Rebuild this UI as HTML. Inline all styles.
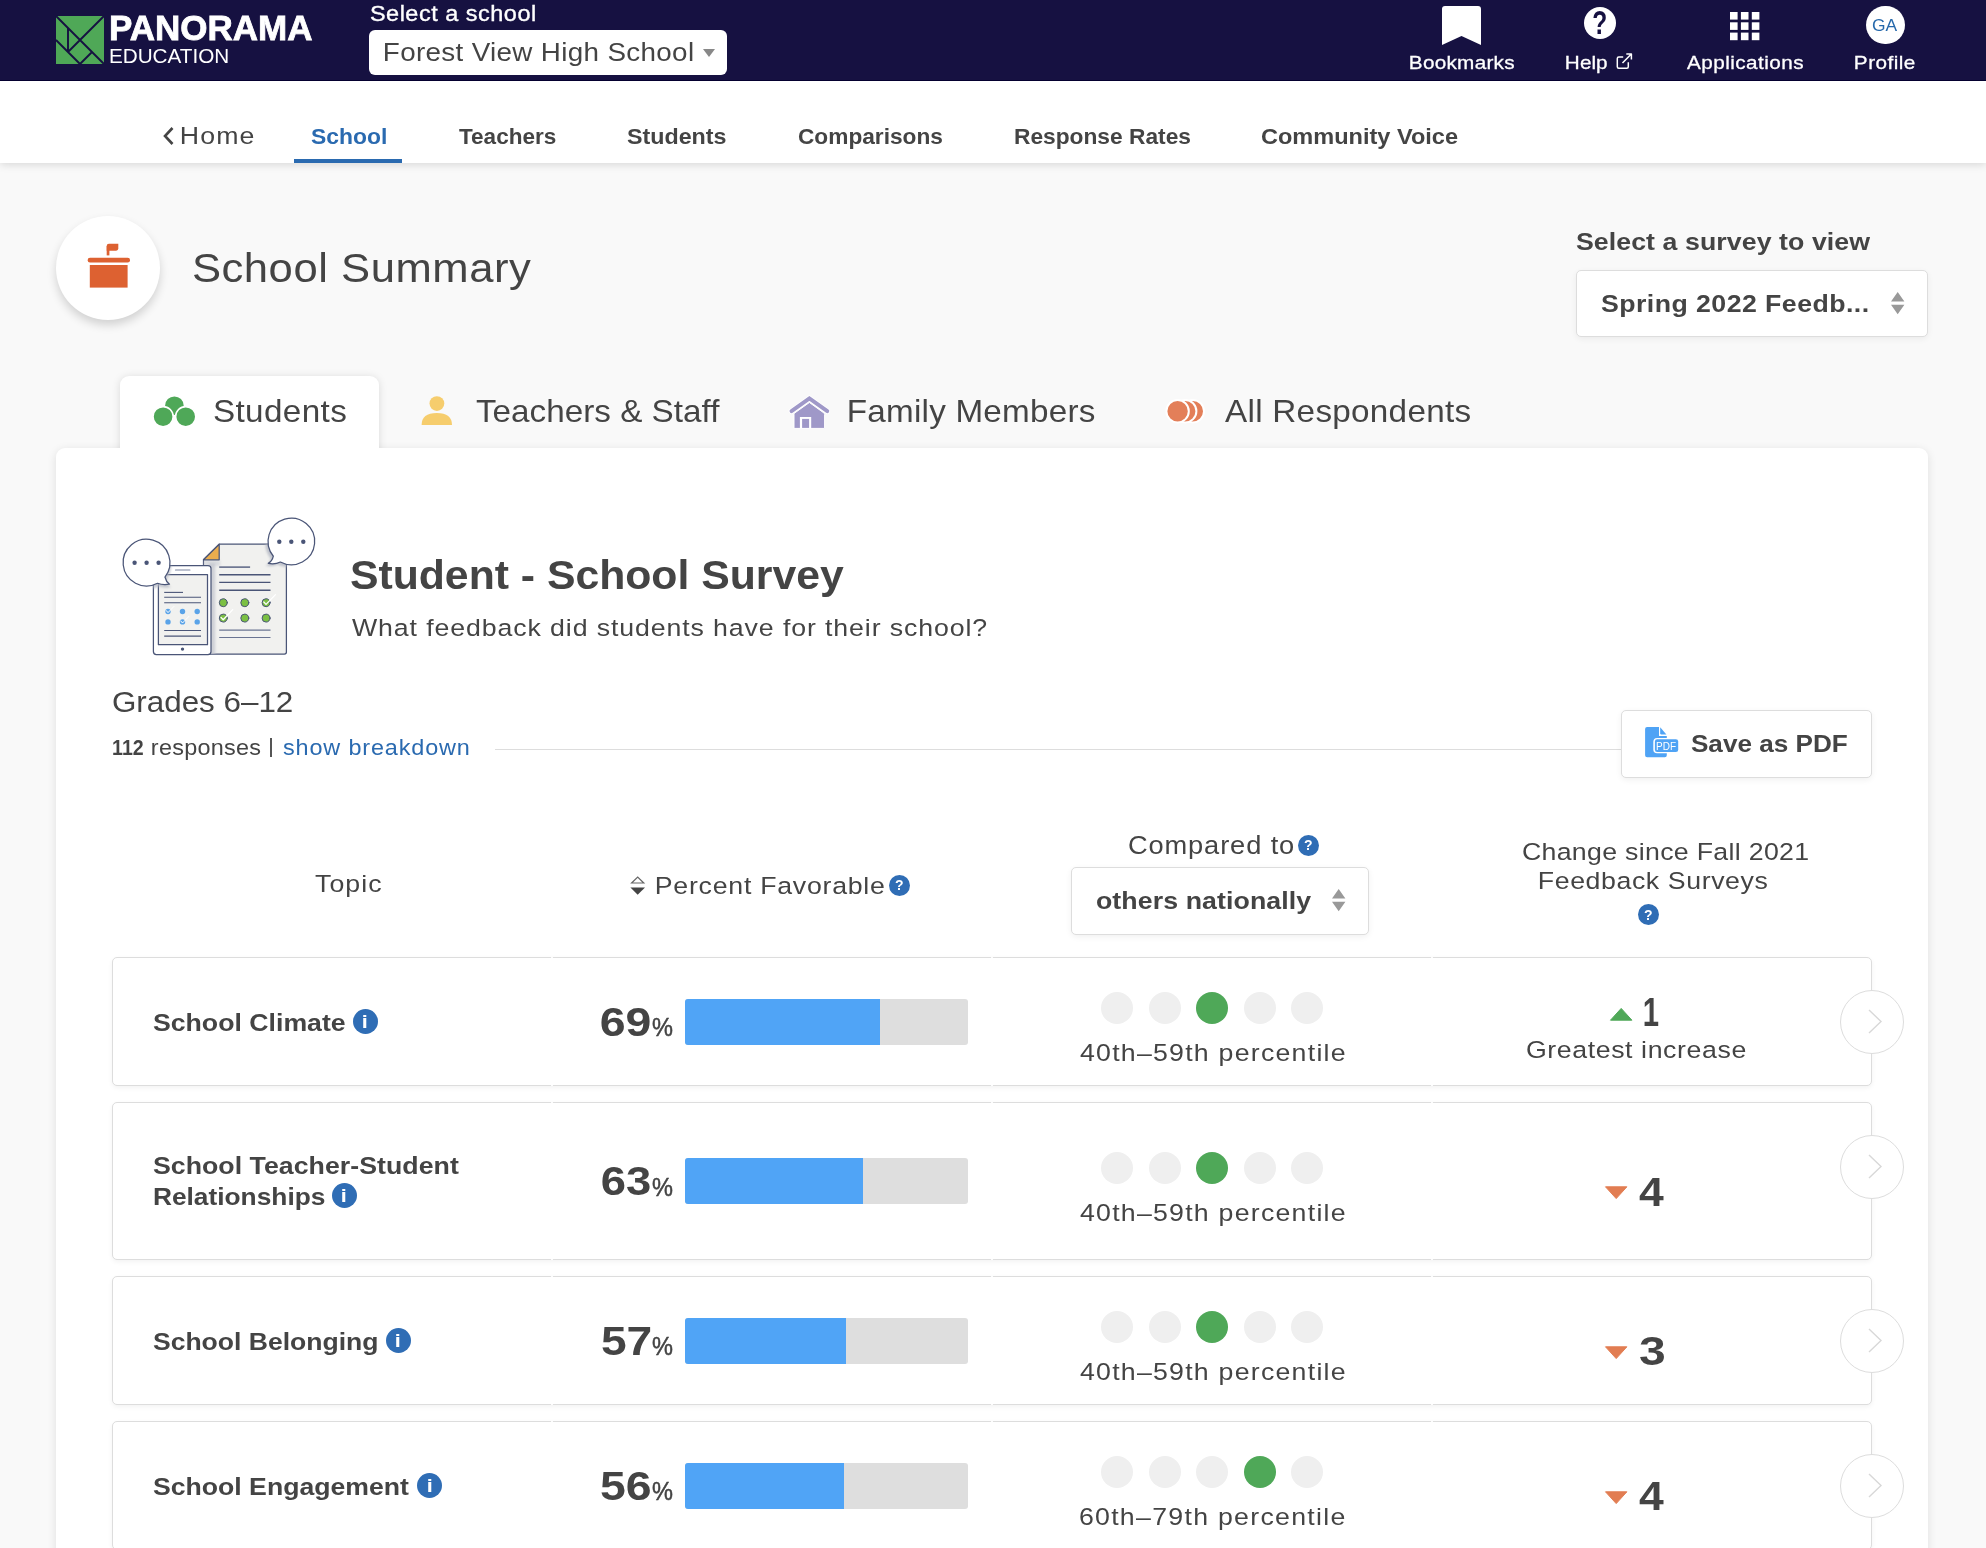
<!DOCTYPE html><html lang="en"><head><meta charset="utf-8"><title>School Summary</title><style>
*{box-sizing:border-box;margin:0;padding:0}
html,body{width:1986px;height:1548px;overflow:hidden}
body{background:#f9f9f9;font-family:"Liberation Sans",sans-serif;color:#444;position:relative}
.t{position:absolute;white-space:nowrap;line-height:1;display:block;text-decoration:none}
.abs{position:absolute}
header{position:absolute;left:0;top:0;width:1986px;height:81px;background:#161141;border-bottom:1px solid #04002f}
nav{position:absolute;left:0;top:81px;width:1986px;height:82px;background:#fff;box-shadow:0 2px 8px rgba(0,0,0,.13)}
main{position:absolute;left:0;top:0;width:1986px;height:1548px}
svg{position:absolute;overflow:visible}
.sel{background:#fff;border:1px solid #ddd;border-radius:5px;box-shadow:0 2px 6px rgba(0,0,0,.06)}
.row{position:absolute;left:112px;width:1760px;background:#fff;border:1px solid #ddd;border-radius:5px;box-shadow:0 2px 5px rgba(0,0,0,.05)}
.nt{position:absolute;width:2px;height:1px;background:#fbfbfb}
.bar{left:685px;width:283px;height:46px;background:#dedede;border-radius:3px;overflow:hidden}
.bar i{display:block;height:46px;background:#50a4f6}
.dot{width:32px;height:32px;border-radius:50%;background:#efefef}
.dot.on{background:#4fa858}
.go{left:1840px;width:64px;height:64px;border-radius:50%;background:#fff;border:1px solid #ddd}
h1,h2,p{font-weight:normal}
</style></head><body><main><div class="abs" style="left:56px;top:216px;width:104px;height:104px;border-radius:50%;background:#fff;box-shadow:0 5px 10px rgba(0,0,0,.16)"></div><svg style="left:87px;top:243px" width="44" height="46" viewBox="87 243 44 46" fill="#dd6131"><rect x="89.8" y="265" width="37.8" height="22.6"/><rect x="87.7" y="257.8" width="42.3" height="4.7" rx="2.3"/><rect x="106.7" y="246" width="2.7" height="9.4"/><path d="M106.7 245.9Q106.7 243.7 108.9 243.7H118.3V248.6Q118.3 250.7 116.2 250.7H106.7Z"/></svg><h1 class="t" style="left:192.2px;top:248px;font-size:40.0px;letter-spacing:0.49px;color:#444;transform:scaleX(1.090);transform-origin:1.2px 0;">School Summary</h1><label class="t" style="left:1576.3px;top:230px;font-size:24.5px;letter-spacing:0.07px;color:#444;font-weight:bold;transform:scaleX(1.090);transform-origin:0.7px 0;">Select a survey to view</label><div class="abs sel" style="left:1576px;top:270px;width:352px;height:67px"></div><span class="t" style="left:1601.1px;top:292px;font-size:24.5px;letter-spacing:0.41px;color:#444;font-weight:bold;transform:scaleX(1.090);transform-origin:0.7px 0;">Spring 2022 Feedb...</span><svg style="left:1890.8px;top:291.6px" width="13.4" height="22.2" viewBox="0 0 13.4 22.2" fill="#999"><path d="M0 9.4L6.7 0L13.4 9.4ZM0 12.8H13.4L6.7 22.2Z"/></svg><div class="abs" style="left:120px;top:376px;width:259px;height:80px;background:#fff;border-radius:9px 9px 0 0;box-shadow:0 1px 8px rgba(0,0,0,.13)"></div><div class="abs" style="left:56px;top:448px;width:1872px;height:1200px;background:#fff;border-radius:9px;box-shadow:0 2px 10px rgba(0,0,0,.11)"></div><div class="abs" style="left:120px;top:440px;width:259px;height:20px;background:#fff"></div><svg style="left:150px;top:392px" width="50" height="40" viewBox="150 392 50 40" fill="#4fa858" stroke="#fff" stroke-width="1.6"><circle cx="174.4" cy="405.7" r="10.1"/><circle cx="163.1" cy="416.7" r="10.1"/><circle cx="185.7" cy="416.7" r="10.1"/></svg><a class="t" style="left:213.1px;top:396px;font-size:30.5px;letter-spacing:0.35px;color:#444;transform:scaleX(1.090);transform-origin:1.0px 0;">Students</a><svg style="left:420px;top:394px" width="34" height="34" viewBox="420 394 34 34" fill="#f6cd6d"><circle cx="436.9" cy="403.6" r="7.4"/><path d="M421.6 425Q421.6 412.9 436.8 412.9Q452 412.9 452 425Z"/></svg><a class="t" style="left:475.8px;top:396px;font-size:30.5px;letter-spacing:0.01px;color:#444;transform:scaleX(1.090);transform-origin:0.5px 0;">Teachers &amp; Staff</a><svg style="left:788px;top:394px" width="44" height="36" viewBox="788 394 44 36"><path d="M809.4 402.5L823.8 412.9Q824.6 413.5 824.6 414.4V428.4H794V414.4Q794 413.5 794.8 412.9Z" fill="#9f98c8" stroke="#fff" stroke-width="1"/><path d="M791.5 411.2L809.4 398.4L827.3 411.2" fill="none" stroke="#fff" stroke-width="5.6" stroke-linecap="round" stroke-linejoin="miter"/><path d="M791.5 411.2L809.4 398.4L827.3 411.2" fill="none" stroke="#9f98c8" stroke-width="3.9" stroke-linecap="round" stroke-linejoin="miter"/><rect x="799.9" y="417" width="11.3" height="11.6" fill="#fff"/><rect x="802.1" y="418.9" width="7" height="9" fill="#9f98c8"/></svg><a class="t" style="left:846.9px;top:396px;font-size:30.5px;letter-spacing:0.20px;color:#444;transform:scaleX(1.090);transform-origin:2.4px 0;">Family Members</a><svg style="left:1165px;top:396px" width="42" height="30" viewBox="1165 396 42 30" fill="#e37f59" stroke="#fff" stroke-width="2"><circle cx="1192.8" cy="411.2" r="11.2"/><circle cx="1185.2" cy="411.2" r="11.2"/><circle cx="1177.6" cy="411.2" r="11.2"/></svg><a class="t" style="left:1225.0px;top:396px;font-size:30.5px;letter-spacing:0.26px;color:#444;transform:scaleX(1.090);transform-origin:-0.0px 0;">All Respondents</a><svg style="left:100px;top:500px" width="340" height="170" viewBox="100 500 340 170" fill="none" stroke="#4a5577" stroke-width="1.25" stroke-linejoin="round" stroke-linecap="round"><defs><filter id="bl" x="-30%" y="-30%" width="160%" height="160%"><feGaussianBlur stdDeviation="1.1"/></filter><clipPath id="cd"><path d="M219.2 544.2H284.4Q286.4 544.2 286.4 546.2V652.1Q286.4 654.1 284.4 654.1H203.5V559.8Z"/></clipPath><clipPath id="ct"><rect x="153.4" y="565.5" width="57.6" height="89" rx="3"/></clipPath></defs><path d="M219.2 544.2H284.4Q286.4 544.2 286.4 546.2V652.1Q286.4 654.1 284.4 654.1H203.5V559.8Z" fill="#f1f1ef"/><g clip-path="url(#cd)" stroke="none"><path d="M203.5 560.4H220.2V566H203.5Z" fill="#c9ccd4" opacity=".55" filter="url(#bl)"/><rect x="209" y="563" width="6.2" height="92" fill="#c3c6cf" opacity=".75" filter="url(#bl)"/><path d="M273.34 556.23A23.3 23.3 0 1 1 280.39 562.03Q275 564.7 268.3 563.4Q272.3 561 273.34 556.23Z" transform="translate(-2.6 2.4)" fill="#b4b8c3" opacity=".8" filter="url(#bl)"/></g><path d="M203.5 559.8H219.2V544.2Z" fill="#eaad4e"/><path d="M219.2 567.1H250.1" stroke-width="1.35" stroke-linecap="butt"/><path d="M219.2 574.7H270.5" stroke-width="1.35" stroke-linecap="butt"/><path d="M219.2 582.4H270.5" stroke-width="1.35" stroke-linecap="butt"/><path d="M219.2 590.2H270.5" stroke-width="1.35" stroke-linecap="butt"/><path d="M219.2 630.1H270.5" stroke-width="1.2" stroke-linecap="butt" stroke="#6a7492"/><path d="M219.2 637.5H270.5" stroke-width="1.2" stroke-linecap="butt" stroke="#6a7492"/><circle cx="223.3" cy="602.7" r="4" fill="#7bc043" stroke-width="1"/><circle cx="244.8" cy="602.7" r="4" fill="#7bc043" stroke-width="1"/><circle cx="266.1" cy="602.7" r="4" fill="#7bc043" stroke-width="1"/><circle cx="223.3" cy="618.1" r="4" fill="#7bc043" stroke-width="1"/><circle cx="244.8" cy="618.1" r="4" fill="#7bc043" stroke-width="1"/><circle cx="266.1" cy="618.1" r="4" fill="#7bc043" stroke-width="1"/><path d="M263.8 602L266 604.4L275.5 594.6" stroke="#fff" stroke-width="1.3"/><path d="M221 617.4L223.2 619.8L232.7 609.6" stroke="#fff" stroke-width="1.3"/><rect x="153.4" y="565.5" width="57.6" height="89" rx="3" fill="#fff"/><rect x="158.4" y="574.5" width="49.1" height="70.2" fill="#f1f1ef"/><g clip-path="url(#ct)" stroke="none"><path d="M164.94 577.01A23.4 23.4 0 1 0 157.49 583.26Q163 585.4 169.5 584.2Q166 581.6 164.94 577.01Z" transform="translate(1.2 3)" fill="#b4b8c3" opacity=".75" filter="url(#bl)"/></g><path d="M175.5 570H189.9" stroke-width="1.2" stroke="#7a84a0"/><circle cx="182.5" cy="649.1" r="1.7" fill="#4a5577" stroke="none"/><path d="M164.2 592.4H183.0" stroke-width="1.1" stroke-linecap="butt"/><path d="M164.2 597.2H201.0" stroke-width="1.1" stroke-linecap="butt"/><path d="M164.2 602.7H201.0" stroke-width="1.1" stroke-linecap="butt"/><path d="M164.2 630.5H201.0" stroke-width="1.1" stroke-linecap="butt"/><path d="M164.2 636.1H201.0" stroke-width="1.1" stroke-linecap="butt"/><circle cx="168.0" cy="611.5" r="2.7" fill="#5aa3e8" stroke="none"/><circle cx="182.5" cy="611.5" r="2.7" fill="#5aa3e8" stroke="none"/><circle cx="197.2" cy="611.5" r="2.7" fill="#5aa3e8" stroke="none"/><circle cx="168.0" cy="621.9" r="2.7" fill="#5aa3e8" stroke="none"/><circle cx="182.5" cy="621.9" r="2.7" fill="#5aa3e8" stroke="none"/><circle cx="197.2" cy="621.9" r="2.7" fill="#5aa3e8" stroke="none"/><path d="M166.3 610.6L168 612.6L174 606.4" stroke="#fff" stroke-width="1"/><path d="M180.8 621L182.5 623L189 616.3" stroke="#fff" stroke-width="1"/><path d="M164.94 577.01A23.4 23.4 0 1 0 157.49 583.26Q163 585.4 169.5 584.2Q166 581.6 164.94 577.01Z" fill="#fff"/><circle cx="134.6" cy="562.8" r="2.2" fill="#4a5577" stroke="none"/><circle cx="146.6" cy="562.8" r="2.2" fill="#4a5577" stroke="none"/><circle cx="158.6" cy="562.8" r="2.2" fill="#4a5577" stroke="none"/><path d="M273.34 556.23A23.3 23.3 0 1 1 280.39 562.03Q275 564.7 268.3 563.4Q272.3 561 273.34 556.23Z" fill="#fff"/><circle cx="279.3" cy="541.7" r="2.2" fill="#4a5577" stroke="none"/><circle cx="291.3" cy="541.7" r="2.2" fill="#4a5577" stroke="none"/><circle cx="303.3" cy="541.7" r="2.2" fill="#4a5577" stroke="none"/></svg><h2 class="t" style="left:349.7px;top:555px;font-size:40.0px;letter-spacing:0.00px;color:#444;font-weight:bold;transform:scaleX(1.068);transform-origin:0.6px 0;">Student - School Survey</h2><p class="t" style="left:352.3px;top:616px;font-size:24.5px;letter-spacing:0.82px;color:#444;transform:scaleX(1.090);transform-origin:0.1px 0;">What feedback did students have for their school?</p><span class="t" style="left:112.3px;top:688px;font-size:29.0px;letter-spacing:0.00px;color:#444;transform:scaleX(1.082);transform-origin:1.4px 0;">Grades 6–12</span><span class="t" style="left:111.8px;top:738px;font-size:21.5px;letter-spacing:0.00px;color:#444;font-weight:bold;transform:scaleX(0.910);transform-origin:1.3px 0;">112</span><span class="t" style="left:150.6px;top:738px;font-size:21.5px;letter-spacing:0.22px;color:#444;transform:scaleX(1.090);transform-origin:1.4px 0;">responses</span><div class="abs" style="left:270px;top:738px;width:2px;height:19px;background:#555"></div><a class="t" style="left:283.2px;top:738px;font-size:21.5px;letter-spacing:0.78px;color:#2a6ab0;transform:scaleX(1.090);transform-origin:0.5px 0;">show breakdown</a><div class="abs" style="left:495px;top:749px;width:1127px;height:1px;background:#ddd"></div><div class="abs sel" style="left:1621px;top:710px;width:251px;height:68px"></div><svg style="left:1640px;top:720px" width="44" height="44" viewBox="1640 720 44 44" fill="#4fa3f5"><path d="M1647.1 726.9H1659V736H1666.8V755.3Q1666.8 757.3 1664.8 757.3H1647.1Q1645.1 757.3 1645.1 755.3V728.9Q1645.1 726.9 1647.1 726.9Z"/><path d="M1660.2 727.3L1666.4 734.5H1661.4Q1660.2 734.5 1660.2 733.3Z"/><rect x="1653.3" y="737.9" width="26.6" height="15.4" rx="3.8" fill="#fff"/><rect x="1654.9" y="739.2" width="23.3" height="12.8" rx="2.3"/></svg><span class="t" style="left:1656.0px;top:741px;font-size:11.0px;letter-spacing:0.00px;color:#fff;transform:scaleX(0.909);transform-origin:0.9px 0;">PDF</span><span class="t" style="left:1690.6px;top:732px;font-size:24.5px;letter-spacing:0.00px;color:#444;font-weight:bold;transform:scaleX(1.066);transform-origin:0.7px 0;">Save as PDF</span><span class="t" style="left:315.4px;top:872px;font-size:24.5px;letter-spacing:0.99px;color:#444;transform:scaleX(1.090);transform-origin:0.5px 0;">Topic</span><svg style="left:630px;top:876px" width="15.4" height="19" viewBox="0 0 15.4 19"><path d="M1.6 7L7.7 1L13.8 7Z" fill="none" stroke="#666" stroke-width="1.2"/><path d="M0 9.3H15.4" stroke="#fff"/><path d="M0.4 11.6H15L7.7 18.8Z" fill="#444"/></svg><span class="t" style="left:655.4px;top:874px;font-size:24.5px;letter-spacing:0.68px;color:#444;transform:scaleX(1.090);transform-origin:2.0px 0;">Percent Favorable</span><span class="abs" style="left:889.0px;top:874.8px;width:21.0px;height:21.0px;border-radius:50%;background:#2f6db5"></span><span class="t" style="left:895.3px;top:877px;font-size:15.0px;letter-spacing:0.00px;color:#fff;font-weight:bold;transform:scaleX(0.935);transform-origin:0.6px 0;">?</span><span class="t" style="left:1127.8px;top:833px;font-size:25.0px;letter-spacing:0.81px;color:#444;transform:scaleX(1.090);transform-origin:1.2px 0;">Compared to</span><span class="abs" style="left:1297.5px;top:834.8px;width:21.0px;height:21.0px;border-radius:50%;background:#2f6db5"></span><span class="t" style="left:1303.8px;top:837px;font-size:15.0px;letter-spacing:0.00px;color:#fff;font-weight:bold;transform:scaleX(0.935);transform-origin:0.6px 0;">?</span><div class="abs sel" style="left:1071px;top:867px;width:298px;height:68px"></div><span class="t" style="left:1095.8px;top:889px;font-size:24.5px;letter-spacing:0.09px;color:#444;font-weight:bold;transform:scaleX(1.090);transform-origin:0.9px 0;">others nationally</span><svg style="left:1332.0px;top:889.1px" width="13.4" height="22.2" viewBox="0 0 13.4 22.2" fill="#999"><path d="M0 9.4L6.7 0L13.4 9.4ZM0 12.8H13.4L6.7 22.2Z"/></svg><span class="t" style="left:1522.1px;top:840px;font-size:24.5px;letter-spacing:0.29px;color:#444;transform:scaleX(1.090);transform-origin:1.2px 0;">Change since Fall 2021</span><span class="t" style="left:1537.5px;top:869px;font-size:24.5px;letter-spacing:0.54px;color:#444;transform:scaleX(1.090);transform-origin:2.0px 0;">Feedback Surveys</span><span class="abs" style="left:1637.5px;top:904.0px;width:21.0px;height:21.0px;border-radius:50%;background:#2f6db5"></span><span class="t" style="left:1643.8px;top:907px;font-size:15.0px;letter-spacing:0.00px;color:#fff;font-weight:bold;transform:scaleX(0.935);transform-origin:0.6px 0;">?</span><section class="row" style="top:957px;height:129px"><i class="nt" style="left:438px;top:-1px"></i><i class="nt" style="left:438px;bottom:-1px"></i><i class="nt" style="left:878px;top:-1px"></i><i class="nt" style="left:878px;bottom:-1px"></i><i class="nt" style="left:1318px;top:-1px"></i><i class="nt" style="left:1318px;bottom:-1px"></i></section><span class="t" style="left:153.4px;top:1011px;font-size:24.5px;letter-spacing:0.00px;color:#444;font-weight:bold;transform:scaleX(1.089);transform-origin:0.7px 0;">School Climate</span><span class="abs" style="left:352.8px;top:1008.8px;width:25.0px;height:25.0px;border-radius:50%;background:#2f6db5"></span><span class="t" style="left:362.2px;top:1013px;font-size:18.0px;letter-spacing:0.00px;color:#fff;font-weight:bold;transform:scaleX(1.200);transform-origin:1.2px 0;">i</span><span class="t" style="left:599.6px;top:1002px;font-size:40.5px;letter-spacing:0.00px;color:#444;font-weight:bold;transform:scaleX(1.146);transform-origin:1.3px 0;">69</span><span class="t" style="left:652.3px;top:1015px;font-size:25.0px;letter-spacing:0.00px;color:#444;-webkit-text-stroke:0.5px #444;transform:scaleX(0.942);transform-origin:0.8px 0;">%</span><div class="abs bar" style="top:999.0px"><i style="width:195.3px"></i></div><span class="abs dot" style="left:1101.0px;top:992.0px"></span><span class="abs dot" style="left:1148.5px;top:992.0px"></span><span class="abs dot on" style="left:1196.0px;top:992.0px"></span><span class="abs dot" style="left:1243.5px;top:992.0px"></span><span class="abs dot" style="left:1291.0px;top:992.0px"></span><span class="t" style="left:1079.7px;top:1041px;font-size:24.5px;letter-spacing:1.14px;color:#444;transform:scaleX(1.090);transform-origin:0.5px 0;">40th–59th percentile</span><svg style="left:1610px;top:1008.0px" width="22.4" height="13" viewBox="0 0 22.4 13"><path d="M11.2 0.4L21.9 12.2H0.5Z" fill="#4fa858" stroke="#4fa858" stroke-width="1" stroke-linejoin="round"/></svg><span class="t" style="left:1642.4px;top:992px;font-size:40.0px;letter-spacing:0.00px;color:#444;font-weight:bold;transform:scaleX(0.731);transform-origin:2.5px 0;">1</span><span class="t" style="left:1525.8px;top:1038px;font-size:24.5px;letter-spacing:0.55px;color:#444;transform:scaleX(1.090);transform-origin:1.2px 0;">Greatest increase</span><div class="abs go" style="top:990px"><svg style="left:27px;top:18px" width="14" height="25" viewBox="0 0 14 25" fill="none" stroke="#d8d8d8" stroke-width="1.4"><path d="M1 1L13 12.5L1 24"/></svg></div><section class="row" style="top:1102px;height:158px"><i class="nt" style="left:438px;top:-1px"></i><i class="nt" style="left:438px;bottom:-1px"></i><i class="nt" style="left:878px;top:-1px"></i><i class="nt" style="left:878px;bottom:-1px"></i><i class="nt" style="left:1318px;top:-1px"></i><i class="nt" style="left:1318px;bottom:-1px"></i></section><span class="t" style="left:153.4px;top:1154px;font-size:24.5px;letter-spacing:0.03px;color:#444;font-weight:bold;transform:scaleX(1.090);transform-origin:0.7px 0;">School Teacher-Student</span><span class="t" style="left:152.5px;top:1185px;font-size:24.5px;letter-spacing:-0.00px;color:#444;font-weight:bold;transform:scaleX(1.074);transform-origin:1.6px 0;">Relationships</span><span class="abs" style="left:331.8px;top:1183.1px;width:25.0px;height:25.0px;border-radius:50%;background:#2f6db5"></span><span class="t" style="left:341.2px;top:1187px;font-size:18.0px;letter-spacing:0.00px;color:#fff;font-weight:bold;transform:scaleX(1.200);transform-origin:1.2px 0;">i</span><span class="t" style="left:600.7px;top:1161px;font-size:40.5px;letter-spacing:-0.00px;color:#444;font-weight:bold;transform:scaleX(1.120);transform-origin:1.3px 0;">63</span><span class="t" style="left:652.3px;top:1175px;font-size:25.0px;letter-spacing:0.00px;color:#444;-webkit-text-stroke:0.5px #444;transform:scaleX(0.942);transform-origin:0.8px 0;">%</span><div class="abs bar" style="top:1158.0px"><i style="width:178.3px"></i></div><span class="abs dot" style="left:1101.0px;top:1152.0px"></span><span class="abs dot" style="left:1148.5px;top:1152.0px"></span><span class="abs dot on" style="left:1196.0px;top:1152.0px"></span><span class="abs dot" style="left:1243.5px;top:1152.0px"></span><span class="abs dot" style="left:1291.0px;top:1152.0px"></span><span class="t" style="left:1079.7px;top:1201px;font-size:24.5px;letter-spacing:1.14px;color:#444;transform:scaleX(1.090);transform-origin:0.5px 0;">40th–59th percentile</span><svg style="left:1604.5px;top:1186.0px" width="22.4" height="13" viewBox="0 0 22.4 13"><path d="M11.2 12.6L21.9 0.8H0.5Z" fill="#e27d52" stroke="#e27d52" stroke-width="1" stroke-linejoin="round"/></svg><span class="t" style="left:1639.2px;top:1172px;font-size:40.0px;letter-spacing:0.00px;color:#444;font-weight:bold;transform:scaleX(1.111);transform-origin:-0.0px 0;">4</span><div class="abs go" style="top:1135px"><svg style="left:27px;top:18px" width="14" height="25" viewBox="0 0 14 25" fill="none" stroke="#d8d8d8" stroke-width="1.4"><path d="M1 1L13 12.5L1 24"/></svg></div><section class="row" style="top:1276px;height:129px"><i class="nt" style="left:438px;top:-1px"></i><i class="nt" style="left:438px;bottom:-1px"></i><i class="nt" style="left:878px;top:-1px"></i><i class="nt" style="left:878px;bottom:-1px"></i><i class="nt" style="left:1318px;top:-1px"></i><i class="nt" style="left:1318px;bottom:-1px"></i></section><span class="t" style="left:153.4px;top:1330px;font-size:24.5px;letter-spacing:0.00px;color:#444;font-weight:bold;transform:scaleX(1.083);transform-origin:0.7px 0;">School Belonging</span><span class="abs" style="left:385.8px;top:1327.8px;width:25.0px;height:25.0px;border-radius:50%;background:#2f6db5"></span><span class="t" style="left:395.2px;top:1332px;font-size:18.0px;letter-spacing:0.00px;color:#fff;font-weight:bold;transform:scaleX(1.200);transform-origin:1.2px 0;">i</span><span class="t" style="left:600.6px;top:1321px;font-size:40.5px;letter-spacing:0.00px;color:#444;font-weight:bold;transform:scaleX(1.139);transform-origin:0.6px 0;">57</span><span class="t" style="left:652.3px;top:1334px;font-size:25.0px;letter-spacing:0.00px;color:#444;-webkit-text-stroke:0.5px #444;transform:scaleX(0.942);transform-origin:0.8px 0;">%</span><div class="abs bar" style="top:1318.0px"><i style="width:161.3px"></i></div><span class="abs dot" style="left:1101.0px;top:1311.0px"></span><span class="abs dot" style="left:1148.5px;top:1311.0px"></span><span class="abs dot on" style="left:1196.0px;top:1311.0px"></span><span class="abs dot" style="left:1243.5px;top:1311.0px"></span><span class="abs dot" style="left:1291.0px;top:1311.0px"></span><span class="t" style="left:1079.7px;top:1360px;font-size:24.5px;letter-spacing:1.14px;color:#444;transform:scaleX(1.090);transform-origin:0.5px 0;">40th–59th percentile</span><svg style="left:1604.5px;top:1345.5px" width="22.4" height="13" viewBox="0 0 22.4 13"><path d="M11.2 12.6L21.9 0.8H0.5Z" fill="#e27d52" stroke="#e27d52" stroke-width="1" stroke-linejoin="round"/></svg><span class="t" style="left:1638.6px;top:1331px;font-size:40.0px;letter-spacing:0.00px;color:#444;font-weight:bold;transform:scaleX(1.200);transform-origin:0.6px 0;">3</span><div class="abs go" style="top:1309px"><svg style="left:27px;top:18px" width="14" height="25" viewBox="0 0 14 25" fill="none" stroke="#d8d8d8" stroke-width="1.4"><path d="M1 1L13 12.5L1 24"/></svg></div><section class="row" style="top:1421px;height:129px"><i class="nt" style="left:438px;top:-1px"></i><i class="nt" style="left:438px;bottom:-1px"></i><i class="nt" style="left:878px;top:-1px"></i><i class="nt" style="left:878px;bottom:-1px"></i><i class="nt" style="left:1318px;top:-1px"></i><i class="nt" style="left:1318px;bottom:-1px"></i></section><span class="t" style="left:153.4px;top:1475px;font-size:24.5px;letter-spacing:0.00px;color:#444;font-weight:bold;transform:scaleX(1.087);transform-origin:0.7px 0;">School Engagement</span><span class="abs" style="left:417.3px;top:1472.8px;width:25.0px;height:25.0px;border-radius:50%;background:#2f6db5"></span><span class="t" style="left:426.7px;top:1477px;font-size:18.0px;letter-spacing:0.00px;color:#fff;font-weight:bold;transform:scaleX(1.200);transform-origin:1.2px 0;">i</span><span class="t" style="left:599.6px;top:1466px;font-size:40.5px;letter-spacing:-0.00px;color:#444;font-weight:bold;transform:scaleX(1.145);transform-origin:0.6px 0;">56</span><span class="t" style="left:652.3px;top:1479px;font-size:25.0px;letter-spacing:0.00px;color:#444;-webkit-text-stroke:0.5px #444;transform:scaleX(0.942);transform-origin:0.8px 0;">%</span><div class="abs bar" style="top:1463.0px"><i style="width:158.5px"></i></div><span class="abs dot" style="left:1101.0px;top:1456.0px"></span><span class="abs dot" style="left:1148.5px;top:1456.0px"></span><span class="abs dot" style="left:1196.0px;top:1456.0px"></span><span class="abs dot on" style="left:1243.5px;top:1456.0px"></span><span class="abs dot" style="left:1291.0px;top:1456.0px"></span><span class="t" style="left:1079.0px;top:1505px;font-size:24.5px;letter-spacing:1.18px;color:#444;transform:scaleX(1.090);transform-origin:1.2px 0;">60th–79th percentile</span><svg style="left:1604.5px;top:1490.5px" width="22.4" height="13" viewBox="0 0 22.4 13"><path d="M11.2 12.6L21.9 0.8H0.5Z" fill="#e27d52" stroke="#e27d52" stroke-width="1" stroke-linejoin="round"/></svg><span class="t" style="left:1639.2px;top:1476px;font-size:40.0px;letter-spacing:0.00px;color:#444;font-weight:bold;transform:scaleX(1.111);transform-origin:-0.0px 0;">4</span><div class="abs go" style="top:1454px"><svg style="left:27px;top:18px" width="14" height="25" viewBox="0 0 14 25" fill="none" stroke="#d8d8d8" stroke-width="1.4"><path d="M1 1L13 12.5L1 24"/></svg></div></main><nav><svg style="left:162.5px;top:46.0px" width="11" height="18" viewBox="0 0 11 18" fill="none" stroke="#444" stroke-width="2.6"><path d="M9.5 1L2 9L9.5 17"/></svg><a class="t" style="left:180.1px;top:43px;font-size:24.5px;letter-spacing:1.00px;color:#444;transform:scaleX(1.090);transform-origin:2.0px 0;">Home</a><a class="t" style="left:310.5px;top:45px;font-size:22.0px;letter-spacing:0.00px;color:#2a6ab0;font-weight:bold;transform:scaleX(1.040);transform-origin:0.6px 0;">School</a><div class="abs" style="left:294px;top:78px;width:108px;height:4px;background:#2a6ab0"></div><a class="t" style="left:458.6px;top:45px;font-size:22.0px;letter-spacing:0.00px;color:#444;font-weight:bold;transform:scaleX(1.024);transform-origin:0.2px 0;">Teachers</a><a class="t" style="left:627.4px;top:45px;font-size:22.0px;letter-spacing:0.00px;color:#444;font-weight:bold;transform:scaleX(1.057);transform-origin:0.6px 0;">Students</a><a class="t" style="left:798.0px;top:45px;font-size:22.0px;letter-spacing:0.00px;color:#444;font-weight:bold;transform:scaleX(1.031);transform-origin:0.9px 0;">Comparisons</a><a class="t" style="left:1013.6px;top:45px;font-size:22.0px;letter-spacing:-0.00px;color:#444;font-weight:bold;transform:scaleX(1.034);transform-origin:1.4px 0;">Response Rates</a><a class="t" style="left:1261.1px;top:45px;font-size:22.0px;letter-spacing:0.00px;color:#444;font-weight:bold;transform:scaleX(1.070);transform-origin:0.9px 0;">Community Voice</a></nav><header><svg style="left:56px;top:16px" width="48" height="48" viewBox="0 0 48 48"><rect width="48" height="48" fill="#4fa857"/><g stroke="#161141" stroke-width="1.9" fill="none" stroke-linecap="butt"><path d="M0 0L48 48M48 0L12 36M12 12V36M0 24L24 48M36 36L24 48"/></g></svg><span class="t" style="left:109.3px;top:11px;font-size:34.5px;letter-spacing:-0.00px;color:#fff;font-weight:bold;-webkit-text-stroke:0.8px #fff;transform:scaleX(1.015);transform-origin:2.2px 0;">PANORAMA</span><span class="t" style="left:109.4px;top:47px;font-size:19.5px;letter-spacing:0.00px;color:#fff;transform:scaleX(1.062);transform-origin:1.6px 0;">EDUCATION</span><label class="t" style="left:369.8px;top:4px;font-size:21.5px;letter-spacing:0.48px;color:#fff;-webkit-text-stroke:0.35px #fff;transform:scaleX(1.090);transform-origin:0.9px 0;">Select a school</label><div class="abs" style="left:369px;top:30px;width:358px;height:45px;background:#fff;border-radius:6px"></div><span class="t" style="left:382.8px;top:40px;font-size:25.5px;letter-spacing:0.31px;color:#444;transform:scaleX(1.090);transform-origin:2.0px 0;">Forest View High School</span><svg style="left:702.5px;top:49px" width="12" height="8" viewBox="0 0 12 8"><path d="M0 0H12L6 8Z" fill="#888"/></svg><svg style="left:1442px;top:6px" width="39" height="39" viewBox="0 0 39 39"><path d="M3 0H36Q39 0 39 3V39L19.5 30L0 39V3Q0 0 3 0Z" fill="#fff"/></svg><span class="t" style="left:1408.5px;top:53px;font-size:19.0px;letter-spacing:0.24px;color:#fff;-webkit-text-stroke:0.3px #fff;transform:scaleX(1.090);transform-origin:1.5px 0;">Bookmarks</span><div class="abs" style="left:1584px;top:6.5px;width:32px;height:32px;border-radius:50%;background:#fff"></div><span class="t" style="left:1592.3px;top:6px;font-size:33.0px;letter-spacing:0.00px;color:#161141;font-weight:bold;transform:scaleX(0.742);transform-origin:1.0px 0;">?</span><span class="t" style="left:1565.2px;top:53px;font-size:19.0px;letter-spacing:0.05px;color:#fff;-webkit-text-stroke:0.3px #fff;transform:scaleX(1.090);transform-origin:1.5px 0;">Help</span><svg style="left:1610px;top:50px" width="26" height="22" viewBox="1610 50 26 22" fill="none" stroke="#fff" stroke-width="1.5" stroke-linejoin="round"><path d="M1623.2 57H1618.8Q1617.3 57 1617.3 58.5V66.8Q1617.3 68.3 1618.8 68.3H1626.8Q1628.3 68.3 1628.3 66.8V62.3"/><path d="M1622.5 63L1631.3 53.9M1626.3 53.9H1631.4V59.6"/></svg><svg style="left:1730px;top:11.5px" width="30" height="29" fill="#fff"><rect x="0.0" y="0.0" width="7.6" height="7.6"/><rect x="10.9" y="0.0" width="7.6" height="7.6"/><rect x="21.8" y="0.0" width="7.6" height="7.6"/><rect x="0.0" y="10.3" width="7.6" height="7.6"/><rect x="10.9" y="10.3" width="7.6" height="7.6"/><rect x="21.8" y="10.3" width="7.6" height="7.6"/><rect x="0.0" y="20.6" width="7.6" height="7.6"/><rect x="10.9" y="20.6" width="7.6" height="7.6"/><rect x="21.8" y="20.6" width="7.6" height="7.6"/></svg><span class="t" style="left:1686.7px;top:53px;font-size:19.0px;letter-spacing:0.41px;color:#fff;-webkit-text-stroke:0.3px #fff;transform:scaleX(1.090);transform-origin:-0.0px 0;">Applications</span><div class="abs" style="left:1866px;top:5.5px;width:38.5px;height:38.5px;border-radius:50%;background:#fff"></div><span class="t" style="left:1872.0px;top:17px;font-size:17.0px;letter-spacing:0.00px;color:#2568ab;transform:scaleX(1.024);transform-origin:0.8px 0;">GA</span><span class="t" style="left:1854.3px;top:53px;font-size:19.0px;letter-spacing:0.41px;color:#fff;-webkit-text-stroke:0.3px #fff;transform:scaleX(1.090);transform-origin:1.5px 0;">Profile</span></header></body></html>
